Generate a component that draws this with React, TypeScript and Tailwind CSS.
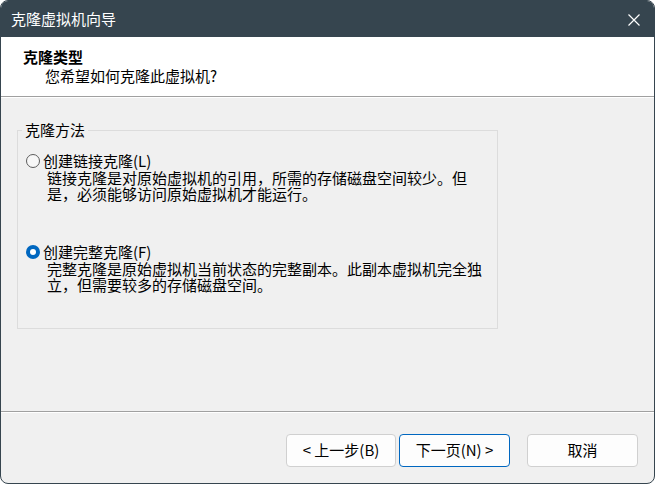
import { useState } from 'react';

type CloneKind = 'linked' | 'full';

const options: { id: CloneKind; label: string; key: string; lines: string[] }[] = [
  {
    id: 'linked',
    label: '创建链接克隆',
    key: '(L)',
    lines: ['链接克隆是对原始虚拟机的引用，所需的存储磁盘空间较少。但', '是，必须能够访问原始虚拟机才能运行。'],
  },
  {
    id: 'full',
    label: '创建完整克隆',
    key: '(F)',
    lines: ['完整克隆是原始虚拟机当前状态的完整副本。此副本虚拟机完全独', '立，但需要较多的存储磁盘空间。'],
  },
];

function Radio({ checked }: { checked: boolean }) {
  if (checked) {
    return (
      <span className="flex h-[14px] w-[14px] shrink-0 items-center justify-center rounded-full bg-[#0067c0]">
        <span className="h-[6px] w-[6px] rounded-full bg-white" />
      </span>
    );
  }
  return <span className="h-[14px] w-[14px] shrink-0 rounded-full border border-[#5c5c5c] bg-[#f7f7f7]" />;
}

export default function App() {
  const [kind, setKind] = useState<CloneKind>('full');

  return (
    <div
      className="flex h-[484px] w-[655px] flex-col overflow-hidden rounded-lg border border-[#36454f] bg-[#f0f0f0] text-[15px] text-black"
      style={{ fontFamily: '"Noto Sans CJK SC", "Noto Sans", sans-serif' }}
    >
      <div className="flex h-[36px] shrink-0 items-center justify-between bg-[#36454f] pl-[10px] pr-[14px] text-white">
        <span className="leading-[18px]">克隆虚拟机向导</span>
        <svg width="12" height="12" viewBox="0 0 12 12" className="mt-[2px]">
          <path d="M0.5 0.5 L11.5 11.5 M11.5 0.5 L0.5 11.5" stroke="white" strokeWidth="1.2" />
        </svg>
      </div>

      <div className="h-[59px] shrink-0 bg-white pl-[22px] pt-[11px]">
        <div className="font-bold leading-[18px]">克隆类型</div>
        <div className="ml-[22px] leading-[20px]">您希望如何克隆此虚拟机?</div>
      </div>
      <div className="h-px shrink-0 bg-[#a0a0a0]" />
      <div className="h-px shrink-0 bg-white" />

      <div className="flex-1 pl-[16px] pt-[22px]">
        <fieldset className="w-[481px] border border-[#dcdcdc] pb-[35px] pl-[8px] pt-[12px]">
          <legend className="-ml-[4px] px-[3px] leading-[20px]">克隆方法</legend>
          {options.map((opt, i) => (
            <div key={opt.id} className={i > 0 ? 'mt-[41px]' : ''} onClick={() => setKind(opt.id)}>
              <div className="flex items-center gap-[3px] leading-[18px]">
                <Radio checked={kind === opt.id} />
                <span>
                  {opt.label}
                  {opt.key}
                </span>
              </div>
              <div className="ml-[21px] leading-[16px]">
                {opt.lines.map((l) => (
                  <div key={l}>{l}</div>
                ))}
              </div>
            </div>
          ))}
        </fieldset>
      </div>

      <div className="h-px shrink-0 bg-[#a0a0a0]" />
      <div className="h-px shrink-0 bg-white" />
      <div className="flex h-[70px] shrink-0 justify-end pr-[16px] pt-[21px]">
        <button className="h-[33px] w-[110px] rounded border border-[#d0d0d0] bg-[#fdfdfd]">&lt; 上一步(B)</button>
        <button className="ml-[3px] h-[33px] w-[111px] rounded border border-[#0067c0] bg-[#fdfdfd]">下一页(N) &gt;</button>
        <button className="ml-[17px] h-[33px] w-[111px] rounded border border-[#d0d0d0] bg-[#fdfdfd]">取消</button>
      </div>
    </div>
  );
}
